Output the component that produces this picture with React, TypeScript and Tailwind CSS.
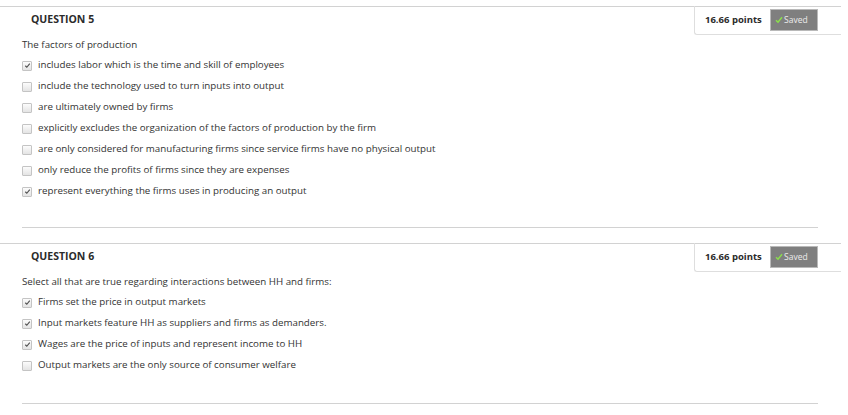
import React from "react";

function Box({ checked }: { checked: boolean }) {
  return (
    <span className="w-[10px] h-[10px] border border-[#c4c4c4] rounded-[1px] bg-gradient-to-b from-[#fcfcfc] to-[#e4e4e4] flex items-center justify-center shrink-0">
      {checked && (
        <svg width="7" height="7" viewBox="0 0 8 8">
          <path d="M1.5 4.3 L3.2 6 L6.6 1.8" fill="none" stroke="#505050" strokeWidth="1.3" />
        </svg>
      )}
    </span>
  );
}

function Question({
  title,
  prompt,
  options,
  bottomGap,
}: {
  title: string;
  prompt: string;
  options: [string, boolean][];
  bottomGap: string;
}) {
  return (
    <div className="w-[841px]">
      <div className="flex justify-between border-t border-[#d2d2d2] h-[29px]">
        <div className="pl-[31px] pt-[5px] text-[10.5px] leading-[14px] font-bold text-[#2b2b2b]">{title}</div>
        <div className="w-[147px] h-[29px] border-l border-b border-[#dedede] rounded-bl-[3px] flex items-center pl-[10px] -mt-px">
          <span className="text-[9.5px] font-bold text-[#2b2b2b] w-[65px]">16.66 points</span>
          <span className="w-[48px] h-[22px] bg-[#7f7f7f] border border-[#b9b9b9] flex items-center pl-[4px] gap-[1px]">
            <svg width="8" height="8" viewBox="0 0 8 8">
              <path d="M1 4.3 L3 6.3 L7 1.3" fill="none" stroke="#8be04a" strokeWidth="1.4" />
            </svg>
            <span className="text-[8.5px] text-[#ececec]">Saved</span>
          </span>
        </div>
      </div>
      <div className="pl-[22px]">
        <div className="h-[18px] mt-[1px] flex items-center text-[9.75px] text-[#333]">{prompt}</div>
        <div className="mt-px">
          {options.map(([t, c]) => (
            <div key={t} className="h-[21px] flex items-center gap-[6px] text-[9.75px] text-[#333]">
              <Box checked={c} />
              <span>{t}</span>
            </div>
          ))}
        </div>
      </div>
      <div className={`ml-[22px] w-[796px] border-b border-[#d2d2d2] ${bottomGap}`} />
    </div>
  );
}

export default function App() {
  return (
    <div className="w-[848px] h-[415px] bg-white pt-[6px] font-['Open_Sans',sans-serif] overflow-hidden">
      <Question
        title="QUESTION 5"
        prompt="The factors of production"
        bottomGap="mt-[25px]"
        options={[
          ["includes labor which is the time and skill of employees", true],
          ["include the technology used to turn inputs into output", false],
          ["are ultimately owned by firms", false],
          ["explicitly excludes the organization of the factors of production by the firm", false],
          ["are only considered for manufacturing firms since service firms have no physical output", false],
          ["only reduce the profits of firms since they are expenses", false],
          ["represent everything the firms uses in producing an output", true],
        ]}
      />
      <div className="h-[15px]" />
      <Question
        title="QUESTION 6"
        prompt="Select all that are true regarding interactions between HH and firms:"
        bottomGap="mt-[27px]"
        options={[
          ["Firms set the price in output markets", true],
          ["Input markets feature HH as suppliers and firms as demanders.", true],
          ["Wages are the price of inputs and represent income to HH", true],
          ["Output markets are the only source of consumer welfare", false],
        ]}
      />
    </div>
  );
}
